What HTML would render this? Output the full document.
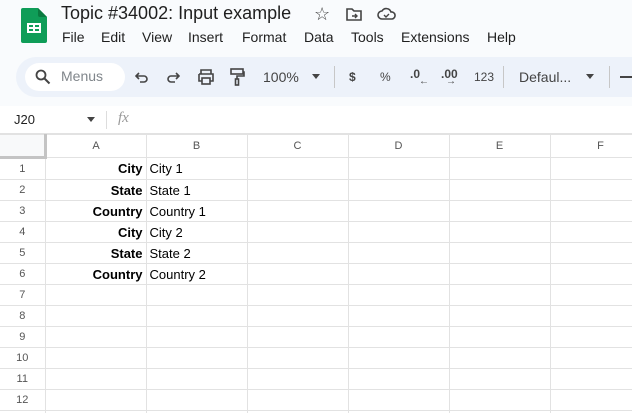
<!DOCTYPE html><html><head><style>
body{margin:0;width:632px;height:413px;overflow:hidden;background:#f9fbfd;font-family:"Liberation Sans",sans-serif;position:relative}
.a{position:absolute}
.tb{color:#444;font-size:14px}
.wrap{position:absolute;left:0;top:134px;width:632px;height:279px;overflow:hidden;background:#fff}
table{border-collapse:collapse;background:#fff;table-layout:fixed;width:651px}
td{border:1px solid #e2e2e2;height:20px;padding:0 3px;font-size:13px;color:#000;white-space:nowrap;overflow:hidden}
td.h{background:#fff;color:#555;text-align:center;font-size:11px;border-left:none}
tr.hd td{height:21px;color:#555;text-align:center;font-size:11px}
td.r{text-align:right;font-weight:bold}
</style></head><body>
<svg class="a" style="left:21px;top:8px" width="26" height="35" viewBox="0 0 26 35"><path d="M2 0h15l9 9v24a2 2 0 0 1-2 2H2a2 2 0 0 1-2-2V2a2 2 0 0 1 2-2z" fill="#0f9d58"/><path d="M17 0l9 9h-7a2 2 0 0 1-2-2z" fill="#0a7a40"/><rect x="6" y="15" width="14" height="10" fill="#fff"/><rect x="8" y="17" width="4" height="2" fill="#0f9d58"/><rect x="14" y="17" width="4" height="2" fill="#0f9d58"/><rect x="8" y="21" width="4" height="2" fill="#0f9d58"/><rect x="14" y="21" width="4" height="2" fill="#0f9d58"/></svg>
<div class="a" style="left:61px;top:3px;font-size:18px;color:#1f1f1f">Topic #34002: Input example</div>
<div class="a" style="left:314px;top:4px;font-size:18px;color:#444">☆</div>
<svg class="a" style="left:345px;top:6px" width="18" height="16"><path d="M2 3h5l2 2h7v9H2z" fill="none" stroke="#444" stroke-width="1.6"/><path d="M7 10h5M10 8l2 2-2 2" fill="none" stroke="#444" stroke-width="1.4"/></svg>
<svg class="a" style="left:377px;top:6px" width="20" height="16"><path d="M5 13a4 4 0 0 1 0-8 5 5 0 0 1 9 1 3.5 3.5 0 0 1 1 7z" fill="none" stroke="#444" stroke-width="1.6"/><path d="M7 9l2 2 3-3" fill="none" stroke="#444" stroke-width="1.4"/></svg>
<div class="a" style="left:62px;top:29px;font-size:14px;color:#1f1f1f">
<span style="position:absolute;left:0">File</span><span style="position:absolute;left:39px">Edit</span><span style="position:absolute;left:80px">View</span><span style="position:absolute;left:126px">Insert</span><span style="position:absolute;left:180px">Format</span><span style="position:absolute;left:242px">Data</span><span style="position:absolute;left:289px">Tools</span><span style="position:absolute;left:339px">Extensions</span><span style="position:absolute;left:425px">Help</span></div>
<div class="a" style="left:16px;top:57px;width:640px;height:40px;background:#edf2fa;border-radius:20px"></div>
<div class="a" style="left:25px;top:63px;width:100px;height:28px;background:#fff;border-radius:14px"></div>
<svg class="a" style="left:35px;top:69px" width="16" height="16"><circle cx="6" cy="6" r="4.5" fill="none" stroke="#444" stroke-width="1.8"/><path d="M9.5 9.5l5 5" stroke="#444" stroke-width="2"/></svg>
<div class="a" style="left:61px;top:68px;font-size:14px;color:#80868b">Menus</div>
<svg class="a" style="left:135px;top:70px" width="14" height="14"><path d="M4 3L1 6l3 3M1 6h8a3 3 0 0 1 0 6H5" fill="none" stroke="#444" stroke-width="1.6"/></svg>
<svg class="a" style="left:166px;top:70px" width="14" height="14"><path d="M10 3l3 3-3 3M13 6H5a3 3 0 0 0 0 6h4" fill="none" stroke="#444" stroke-width="1.6"/></svg>
<svg class="a" style="left:197px;top:69px" width="18" height="16"><path d="M4 5V1h10v4M2 5h14v7h-3M5 12H2V5" fill="none" stroke="#444" stroke-width="1.6"/><rect x="5" y="9" width="8" height="6" fill="none" stroke="#444" stroke-width="1.6"/></svg>
<svg class="a" style="left:229px;top:68px" width="16" height="18"><rect x="2" y="1" width="12" height="5" fill="none" stroke="#444" stroke-width="1.6"/><path d="M14 4h1v4H8v3" fill="none" stroke="#444" stroke-width="1.6"/><rect x="6.5" y="11" width="3" height="6" fill="none" stroke="#444" stroke-width="1.6"/></svg>
<div class="a tb" style="left:263px;top:69px">100%</div>
<div class="a" style="left:312px;top:74px;border:4px solid transparent;border-top:5px solid #444"></div>
<div class="a" style="left:334px;top:66px;width:1px;height:22px;background:#c7c7c7"></div>
<div class="a tb" style="left:349px;top:70px;font-size:12px;font-weight:bold">$</div>
<div class="a tb" style="left:380px;top:70px;font-size:12px">%</div>
<div class="a tb" style="left:410px;top:67px;font-size:12px;font-weight:bold">.0</div>
<div class="a tb" style="left:419px;top:76px;font-size:10px;font-weight:bold">←</div>
<div class="a tb" style="left:441px;top:67px;font-size:12px;font-weight:bold">.00</div>
<div class="a tb" style="left:446px;top:76px;font-size:10px;font-weight:bold">→</div>
<div class="a tb" style="left:474px;top:70px;font-size:12px">123</div>
<div class="a" style="left:503px;top:66px;width:1px;height:22px;background:#c7c7c7"></div>
<div class="a tb" style="left:519px;top:69px">Defaul...</div>
<div class="a" style="left:586px;top:74px;border:4px solid transparent;border-top:5px solid #444"></div>
<div class="a" style="left:609px;top:66px;width:1px;height:22px;background:#c7c7c7"></div>
<div class="a" style="left:620px;top:76px;width:12px;height:2px;background:#444"></div>
<div class="a" style="left:0;top:106px;width:632px;height:27px;background:#fff;border-bottom:1px solid #e2e2e2"></div>
<div class="a" style="left:14px;top:112px;font-size:13px;color:#1f1f1f">J20</div>
<div class="a" style="left:87px;top:117px;border:4px solid transparent;border-top:5px solid #444"></div>
<div class="a" style="left:106px;top:111px;width:1px;height:18px;background:#ddd"></div>
<div class="a" style="left:118px;top:110px;font-size:15px;color:#999;font-style:italic;font-family:'Liberation Serif',serif">fx</div>
<div class="wrap"><table>
<colgroup><col style="width:45px"><col style="width:101px"><col style="width:101px"><col style="width:101px"><col style="width:101px"><col style="width:101px"><col style="width:101px"></colgroup>
<tr class="hd"><td style="background:#f8f9fa;border-left:none;border-right:3px solid #c4c4c4;border-bottom:3px solid #c4c4c4"></td><td>A</td><td>B</td><td>C</td><td>D</td><td>E</td><td>F</td></tr>
<tr><td class="h">1</td><td class="r">City</td><td>City 1</td><td></td><td></td><td></td><td></td></tr>
<tr><td class="h">2</td><td class="r">State</td><td>State 1</td><td></td><td></td><td></td><td></td></tr>
<tr><td class="h">3</td><td class="r">Country</td><td>Country 1</td><td></td><td></td><td></td><td></td></tr>
<tr><td class="h">4</td><td class="r">City</td><td>City 2</td><td></td><td></td><td></td><td></td></tr>
<tr><td class="h">5</td><td class="r">State</td><td>State 2</td><td></td><td></td><td></td><td></td></tr>
<tr><td class="h">6</td><td class="r">Country</td><td>Country 2</td><td></td><td></td><td></td><td></td></tr>
<tr><td class="h">7</td><td></td><td></td><td></td><td></td><td></td><td></td></tr>
<tr><td class="h">8</td><td></td><td></td><td></td><td></td><td></td><td></td></tr>
<tr><td class="h">9</td><td></td><td></td><td></td><td></td><td></td><td></td></tr>
<tr><td class="h">10</td><td></td><td></td><td></td><td></td><td></td><td></td></tr>
<tr><td class="h">11</td><td></td><td></td><td></td><td></td><td></td><td></td></tr>
<tr><td class="h">12</td><td></td><td></td><td></td><td></td><td></td><td></td></tr>
<tr><td class="h"></td><td></td><td></td><td></td><td></td><td></td><td></td></tr>
</table></div>
</body></html>
